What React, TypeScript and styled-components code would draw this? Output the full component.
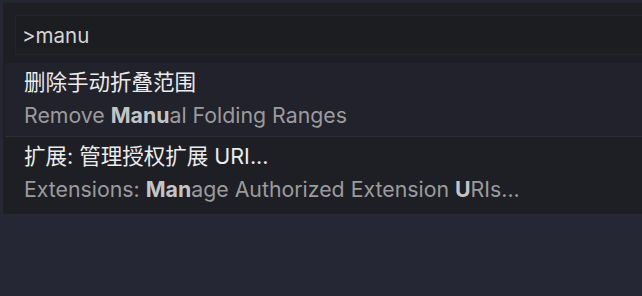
import React from "react";
import styled, { createGlobalStyle } from "styled-components";

const Global = createGlobalStyle`
  html, body {
    margin: 0;
    padding: 0;
    background: #252734;
    overflow: hidden;
  }
  body {
    font-family: Inter, "Noto Sans CJK SC", "Noto Sans", sans-serif;
  }
`;

const Screen = styled.div`
  width: 642px;
  height: 296px;
  padding: 2px 0 0 2px;
  box-sizing: border-box;
  overflow: hidden;
`;

const Palette = styled.div`
  width: 680px;
  background: #1e1f24;
  border-left: 1px solid #26272f;
  border-top: 1px solid #23242b;
  padding: 12px 0 0 2px;
  box-sizing: border-box;
  display: flex;
  flex-direction: column;
`;

const InputBox = styled.div`
  margin-left: 10px;
  height: 40px;
  box-sizing: border-box;
  background: #1c1d21;
  border: 1px solid #24252b;
  border-right: none;
  display: flex;
  align-items: center;
  padding-left: 6px;
  font-size: 20.5px;
  color: #d6d6d6;
`;

const List = styled.div`
  margin-top: 8px;
  display: flex;
  flex-direction: column;
`;

const Row = styled.div<{ $selected?: boolean }>`
  height: ${(p) => (p.$selected ? 73 : 78)}px;
  box-sizing: border-box;
  padding: 7px 0 0 19px;
  background: ${(p) => (p.$selected ? "#21222b" : "transparent")};
  border-top: ${(p) => (p.$selected ? "none" : "1px solid #2b2c38")};
  display: flex;
  flex-direction: column;
`;

const Title = styled.div`
  height: 24px;
  line-height: 24px;
  font-size: 21.5px;
  color: #ececec;
  white-space: nowrap;
`;

const Detail = styled.div`
  margin-top: 8px;
  height: 26px;
  line-height: 26px;
  font-size: 21.3px;
  color: #9b9b9e;
  white-space: nowrap;
`;

const Match = styled.b`
  font-weight: 700;
  color: #c4c4c6;
`;

export default function App() {
  return (
    <>
      <Global />
      <Screen>
        <Palette>
          <InputBox>&gt;manu</InputBox>
          <List>
            <Row $selected>
              <Title>删除手动折叠范围</Title>
              <Detail>
                Remove <Match>Manu</Match>al Folding Ranges
              </Detail>
            </Row>
            <Row>
              <Title>扩展: 管理授权扩展 URI...</Title>
              <Detail>
                Extensions: <Match>Man</Match>age Authorized Extension <Match>U</Match>RIs...
              </Detail>
            </Row>
          </List>
        </Palette>
      </Screen>
    </>
  );
}
